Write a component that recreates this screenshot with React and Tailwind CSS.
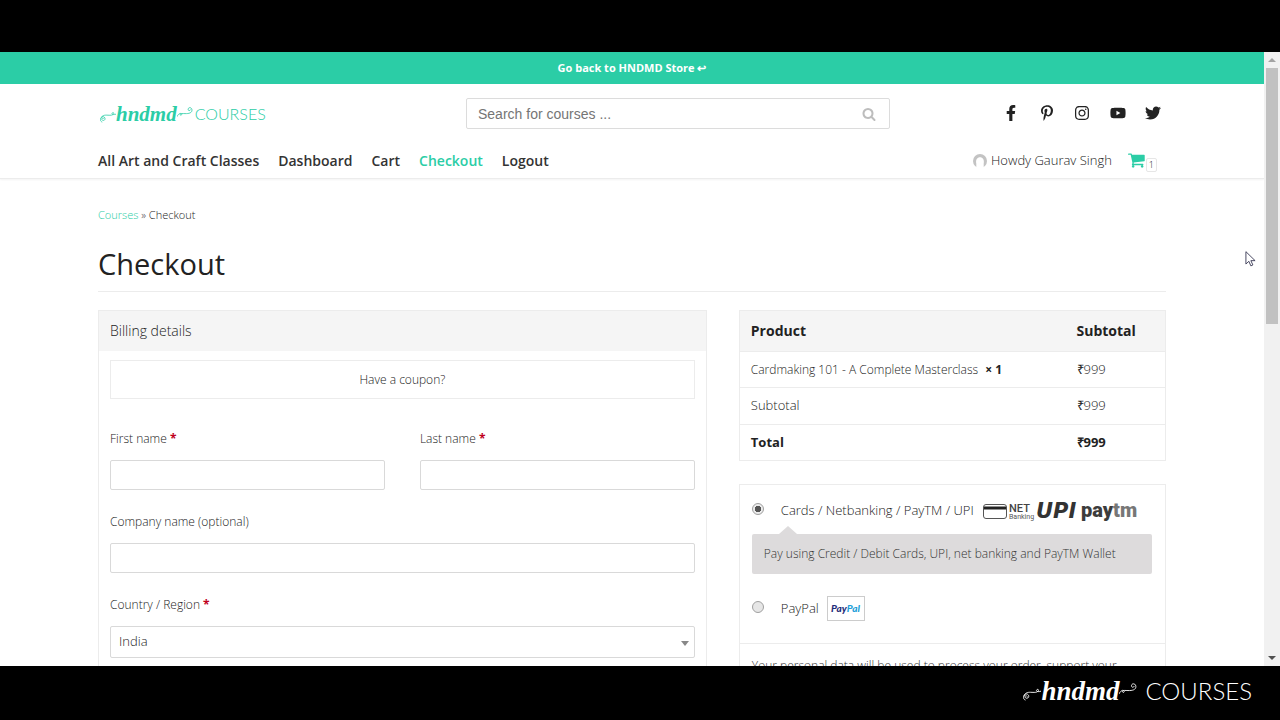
import React, { useState } from "react";
import clsx from "clsx";
import { FaFacebookF, FaInstagram, FaPinterestP, FaTwitter, FaYoutube } from "react-icons/fa";

const navLinks = ["All Art and Craft Classes", "Dashboard", "Cart", "Checkout", "Logout"]

const socials = [
    { name: "Facebook", Icon: FaFacebookF },
    { name: "Pinterest", Icon: FaPinterestP },
    { name: "Instagram", Icon: FaInstagram },
    { name: "YouTube", Icon: FaYoutube },
    { name: "Twitter", Icon: FaTwitter },
]

function SearchIcon() {
    return (
        <svg viewBox="0 0 1792 1792" className="size-[14px]" fill="#bdbdbd">
            <path d="M1216 832q0-185-131.500-316.500t-316.500-131.500-316.500 131.500-131.500 316.500 131.500 316.500 316.500 131.500 316.500-131.500 131.500-316.500zm512 832q0 52-38 90t-90 38q-54 0-90-38l-343-342q-179 124-399 124-143 0-273.500-55.500t-225-150-150-225-55.500-273.500 55.500-273.500 150-225 225-150 273.500-55.500 273.500 55.500 225 150 150 225 55.500 273.500q0 220-124 399l343 343q37 37 37 90z" />
        </svg>
    )
}

function CartIcon() {
    return (
        <svg viewBox="0 0 1792 1792" className="size-[18px] mb-[2px]" fill="#2bcda6">
            <path d="M640 1536q0 52-38 90t-90 38-90-38-38-90 38-90 90-38 90 38 38 90zm896 0q0 52-38 90t-90 38-90-38-38-90 38-90 90-38 90 38 38 90zm128-1088v512q0 24-16.500 42.500t-40.500 21.500l-1044 122q13 60 13 70 0 16-24 64h920q26 0 45 19t19 45-19 45-45 19h-1024q-26 0-45-19t-19-45q0-11 8-31.500t16-36 21.500-40 15.500-29.500l-177-823h-204q-26 0-45-19t-19-45 19-45 45-19h256q16 0 28.500 6.500t19.500 15.500 13 24.500 8 26 5.500 29.500 4.500 26h1201q26 0 45 19t19 45z" />
        </svg>
    )
}

function Logo({ large }) {
    return (
        <span className={clsx("flex items-center", large ? "text-white" : "text-[#2bcda6] pl-[2px]")}>
            <svg viewBox="0 0 16 24" className={large ? "w-[18px] h-8" : "w-4 h-6"} fill="none" stroke="currentColor" strokeWidth="0.8" strokeLinecap="round">
                <path d="M3.600 16.600c-.7-1-2.200-.3-1.800.9.4 1.300 2.700 1.300 3.200-.2.600-1.800-1.600-3.500-3.300-2.300-2 1.500-1.600 4.500.2 5M1.200 16C2 13 5 13 8 13.200c3 .1 4 .1 5.200-.9 1.300-1 .2-2.300-.8-1.500-1.200 1 .2 2.600 3.600 1.400" />
            </svg>
            <span className={clsx("font-['Liberation_Serif',serif] italic font-bold leading-6", large ? "text-[27px]" : "text-[21px]")}>hndmd</span>
            <svg viewBox="0 0 16 24" className={large ? "w-[18px] h-8" : "w-4 h-6"} fill="none" stroke="currentColor" strokeWidth="0.8" strokeLinecap="round">
                <path d="M0 14.500c1.500-3 3.500-3.600 4.400-2.700.9 1-.7 2.200-1.200 1C2.600 11.200 5 11.500 8 11.600c4 .1 7-.6 7-3.600 0-2.800-3.600-3.200-3.900-.8-.2 1.700 2 2.100 2.300.7" />
            </svg>
            <span className={clsx("font-[Lato,sans-serif] font-light", large ? "ml-2 text-[24px]" : "ml-[2px] text-base leading-6")}>COURSES</span>
        </span>
    )
}

function Field({ id, label, required }) {
    return (
        <div className="flex flex-col gap-[11px]">
            <label htmlFor={id} className="leading-5">
                {label} {required && <span className="font-bold text-[#c0001d]">*</span>}
            </label>
            <input id={id} type="text" className="w-full h-[30px] border border-[#d9d9d9] rounded-xs px-2 outline-none" />
        </div>
    )
}

function Header() {
    return (
        <header className="border-b border-[#ececec] shadow-xs">
            <a href="#" className="block bg-[#2bcda6] text-white text-[11px] font-bold text-center leading-8">
                Go back to HNDMD Store ↩
            </a>
            <div className="max-w-[1068px] mx-auto">
                <div className="flex items-center pt-[14px]">
                    <div className="flex-4">
                        <a href="#" className="flex w-fit"><Logo /></a>
                    </div>
                    <form className="flex items-center w-[424px] h-[31px] border border-[#dcdcdc] rounded-xs pl-[11px] pr-[13px]">
                        <input
                            type="text"
                            aria-label="Search for courses"
                            placeholder="Search for courses ..."
                            className="flex-1 outline-none font-['Liberation_Sans',sans-serif] font-normal text-sm placeholder:text-[#757575]"
                        />
                        <button type="submit" aria-label="Search"><SearchIcon /></button>
                    </form>
                    <div className="flex-3">
                        <div className="flex justify-between w-[158px] ml-auto mr-[5px] pb-[2px] text-[#222]">
                            {socials.map(({ name, Icon }) => (
                                <a key={name} href="#" aria-label={name}><Icon className="size-4" /></a>
                            ))}
                        </div>
                    </div>
                </div>
                <div className="flex items-center justify-between h-[49px] pt-4 pb-[1px]">
                    <nav className="flex gap-[19px] text-sm font-semibold text-[#333]">
                        {navLinks.map((link) => (
                            <a key={link} href="#" className={clsx(link === "Checkout" && "text-[#2bcda6]")}>{link}</a>
                        ))}
                    </nav>
                    <div className="flex items-center pr-[9px]">
                        <a href="#" className="flex items-center gap-1 text-[13px]">
                            <svg viewBox="0 0 14 14" className="size-[14px]">
                                <circle cx="7" cy="7" r="7" fill="#c3c3c3" />
                                <path d="M3.300 14V9.800C2.500 5.500 4.300 3.200 7 3.200s4.500 2.300 3.700 6.600V14z" fill="#fff" />
                            </svg>
                            Howdy Gaurav Singh
                        </a>
                        <a href="#" aria-label="Cart" className="flex items-center ml-4">
                            <CartIcon />
                            <span className="mt-2 border border-[#e6e6e6] rounded-xs px-[2px] text-[9px] leading-3">1</span>
                        </a>
                    </div>
                </div>
            </div>
        </header>
    )
}

function Billing() {
    return (
        <section className="border border-[#ececec]">
            <h2 className="bg-[#f5f5f5] px-[11px] text-sm leading-[40px]">Billing details</h2>
            <div className="px-[11px] pt-[9px] pb-8 text-xs">
                <button className="block w-full h-[39px] border border-[#ececec] mb-[30px]">Have a coupon?</button>
                <div className="flex flex-col gap-[22px]">
                    <div className="grid grid-cols-2 gap-[35px]">
                        <Field id="first" label="First name" required />
                        <Field id="last" label="Last name" required />
                    </div>
                    <Field id="company" label="Company name (optional)" />
                    <div className="flex flex-col gap-[11px]">
                        <label htmlFor="country" className="leading-5">
                            Country / Region <span className="font-bold text-[#c0001d]">*</span>
                        </label>
                        <div className="relative">
                            <select id="country" className="appearance-none w-full h-8 border border-[#d9d9d9] rounded-xs px-2 text-[13px] outline-none">
                                <option>India</option>
                            </select>
                            <span className="absolute right-[6px] top-[15px] border-x-4 border-t-5 border-x-transparent border-t-[#888] pointer-events-none"></span>
                        </div>
                    </div>
                </div>
            </div>
        </section>
    )
}

function OrderTable() {
    return (
        <table className="w-full border border-[#ececec] text-left text-[13px]">
            <thead className="bg-[#f5f5f5] text-sm text-[#222]">
                <tr className="h-[41px]">
                    <th className="pl-[11px] font-bold">Product</th>
                    <th className="w-[89px] font-bold">Subtotal</th>
                </tr>
            </thead>
            <tbody>
                <tr className="h-[36px] border-t border-[#ececec]">
                    <td className="pl-[11px] text-xs">Cardmaking 101 - A Complete Masterclass <strong className="ml-1 font-bold text-[#222]">× 1</strong></td>
                    <td>₹999</td>
                </tr>
                <tr className="h-[37px] border-t border-[#ececec]">
                    <td className="pl-[11px]">Subtotal</td>
                    <td>₹999</td>
                </tr>
                <tr className="h-[36px] border-t border-[#ececec] font-bold text-[#222]">
                    <td className="pl-[11px]">Total</td>
                    <td>₹999</td>
                </tr>
            </tbody>
        </table>
    )
}

function CardLogos() {
    return (
        <svg viewBox="0 0 156 32" className="w-[156px] h-8 shrink-0">
            <rect x="0.500" y="9.500" width="23" height="14" rx="2.500" fill="#fff" stroke="#555" />
            <path d="M1 11.500h22v3H1z" fill="#222" />
            <text x="26" y="17" fontFamily="Roboto" fontSize="11" fontWeight="500" fill="#444">NET</text>
            <text x="26" y="24" fontFamily="Roboto" fontSize="7" fontWeight="400" fill="#555">Banking</text>
            <text x="53" y="23" fontFamily="DejaVu Sans" fontSize="21" fontWeight="700" fontStyle="italic" fill="#333">UPI</text>
            <text x="98" y="22" fontFamily="Roboto" fontSize="20" fontWeight="900" fill="#3c3c3c">pay<tspan fill="#777">tm</tspan></text>
        </svg>
    )
}

function Radio({ id, checked, onChange }) {
    return (
        <input
            id={id}
            type="radio"
            name="payment"
            checked={checked}
            onChange={onChange}
            className="appearance-none size-3 mb-1 shrink-0 rounded-full border border-[#a0a0a0] bg-[#e6e6e6] checked:bg-[radial-gradient(circle,#555_0_3px,#ececec_3px)]"
        />
    )
}

function Payment() {
    const [method, setMethod] = useState("cards")

    return (
        <section className="border border-[#ececec] mt-[23px] text-[13px] text-[#222]">
            <div className="px-3 pt-4 h-[158px]">
                <div className="flex items-center h-5">
                    <Radio id="cards" checked={method === "cards"} onChange={() => setMethod("cards")} />
                    <label htmlFor="cards" className="flex items-center gap-[9px] ml-[17px] whitespace-nowrap">
                        Cards / Netbanking / PayTM / UPI <CardLogos />
                    </label>
                </div>
                <div className="relative mt-[13px] mr-[1px] px-3 bg-[#dddbdc] rounded-xs text-xs leading-[40px] text-[#333]">
                    <span className="absolute left-[27px] -top-2 border-x-9 border-b-8 border-x-transparent border-b-[#dddbdc]"></span>
                    Pay using Credit / Debit Cards, UPI, net banking and PayTM Wallet
                </div>
                <div className="flex items-center mt-[22px]">
                    <Radio id="paypal" checked={method === "paypal"} onChange={() => setMethod("paypal")} />
                    <label htmlFor="paypal" className="flex items-center gap-2 ml-[17px]">
                        PayPal
                        <svg viewBox="0 0 38 25" className="w-[38px] h-[25px]">
                            <rect x="0.500" y="0.500" width="37" height="24" fill="#fff" stroke="#ccc" />
                            <text x="4" y="16" fontFamily="Lato" fontSize="10" fontWeight="900" fontStyle="italic" fill="#1f2f7a">Pay<tspan fill="#1f9fd8">Pal</tspan></text>
                        </svg>
                    </label>
                </div>
            </div>
            <p className="border-t border-[#ececec] px-3 pt-[10px] text-xs leading-6 text-[#333]">
                Your personal data will be used to process your order, support your
            </p>
        </section>
    )
}

function Scrollbar() {
    return (
        <div className="w-4 shrink-0 flex flex-col items-center bg-[#f1f1f1]">
            <span className="my-[6px] border-x-4 border-b-4 border-x-transparent border-b-[#a3a3a3]"></span>
            <span className="w-3 h-64 bg-[#c1c1c1]"></span>
            <span className="mt-auto mb-[6px] border-x-4 border-t-4 border-x-transparent border-t-[#505050]"></span>
        </div>
    )
}

function App() {
    return (
        <div className="h-screen flex flex-col bg-black font-['Open_Sans',sans-serif] font-light text-[#222]">
            <div className="h-[52px] shrink-0"></div>
            <div className="flex-1 min-h-0 flex overflow-hidden bg-white relative">
                <div className="flex-1 overflow-hidden">
                    <Header />
                    <main className="max-w-[1068px] mx-auto">
                        <div className="pt-7 text-[11px] leading-4">
                            <a href="#" className="text-[#2bcda6]">Courses</a> » Checkout
                        </div>
                        <h1 className="mt-[21px] pb-[7px] border-b border-[#ececec] text-[29px] leading-[40px] font-normal text-[#222]">Checkout</h1>
                        <div className="grid grid-cols-[57%_40%] justify-between items-start mt-[18px]">
                            <Billing />
                            <div>
                                <OrderTable />
                                <Payment />
                            </div>
                        </div>
                    </main>
                </div>
                <Scrollbar />
                {/* mouse pointer */}
                <svg viewBox="0 0 12 18" className="absolute right-6 top-[198px] w-[11px] h-[18px]" fill="#fff" stroke="#3a3a55" strokeWidth="1">
                    <path d="M1 1v13.500l3.200-3 2.200 5 2.200-1-2.200-4.700H11z" />
                </svg>
            </div>
            <div className="h-[54px] shrink-0 flex items-center justify-end pr-7 pb-1">
                <Logo large />
            </div>
        </div>
    )
}

export default App;
